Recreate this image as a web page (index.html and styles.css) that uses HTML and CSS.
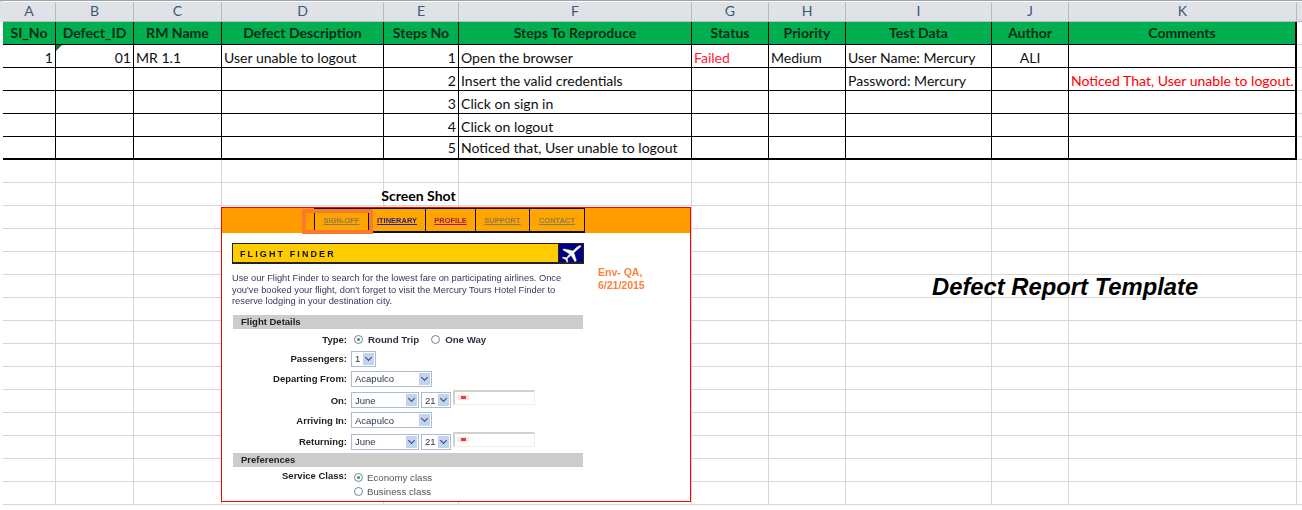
FILE: index.html
```html
<!DOCTYPE html>
<html lang="en">
<head>
<meta charset="utf-8">
<title>Defect Report Template</title>
<link rel="stylesheet" href="styles.css">
</head>
<body>
<main class="sheet">
  <div class="h">A</div><div class="h">B</div><div class="h">C</div><div class="h">D</div><div class="h">E</div><div class="h">F</div><div class="h">G</div><div class="h">H</div><div class="h">I</div><div class="h">J</div><div class="h">K</div><div class="h h-end"></div>

  <div class="g">SI_No</div><div class="g">Defect_ID</div><div class="g">RM Name</div><div class="g">Defect Description</div><div class="g">Steps No</div><div class="g">Steps To Reproduce</div><div class="g">Status</div><div class="g">Priority</div><div class="g">Test Data</div><div class="g">Author</div><div class="g k">Comments</div><div class="e"></div>

  <div class="d r">1</div><div class="d r flag">01</div><div class="d">MR 1.1</div><div class="d">User unable to logout</div><div class="d r">1</div><div class="d">Open the browser</div><div class="d failed">Failed</div><div class="d">Medium</div><div class="d">User Name: Mercury</div><div class="d c">ALI</div><div class="d k"></div><div class="e"></div>

  <div class="d"></div><div class="d"></div><div class="d"></div><div class="d"></div><div class="d r">2</div><div class="d">Insert the valid credentials</div><div class="d"></div><div class="d"></div><div class="d">Password: Mercury</div><div class="d"></div><div class="d k red">Noticed That, User unable to logout.</div><div class="e"></div>

  <div class="d"></div><div class="d"></div><div class="d"></div><div class="d"></div><div class="d r">3</div><div class="d">Click on sign in</div><div class="d"></div><div class="d"></div><div class="d"></div><div class="d"></div><div class="d k"></div><div class="e"></div>

  <div class="d"></div><div class="d"></div><div class="d"></div><div class="d"></div><div class="d r">4</div><div class="d">Click on logout</div><div class="d"></div><div class="d"></div><div class="d"></div><div class="d"></div><div class="d k"></div><div class="e"></div>

  <div class="d l"></div><div class="d l"></div><div class="d l"></div><div class="d l"></div><div class="d l r">5</div><div class="d l">Noticed that, User unable to logout</div><div class="d l"></div><div class="d l"></div><div class="d l"></div><div class="d l"></div><div class="d l k"></div><div class="e"></div>

  <div class="e"></div><div class="e"></div><div class="e"></div><div class="e"></div><div class="e"></div><div class="e"></div><div class="e"></div><div class="e"></div><div class="e"></div><div class="e"></div><div class="e"></div><div class="e"></div>

  <div class="e"></div><div class="e"></div><div class="e"></div><div class="e"></div><div class="e shot">Screen Shot</div><div class="e"></div><div class="e"></div><div class="e"></div><div class="e"></div><div class="e"></div><div class="e"></div><div class="e"></div>

  <div class="e"></div><div class="e"></div><div class="e"></div><div class="e"></div><div class="e"></div><div class="e"></div><div class="e"></div><div class="e"></div><div class="e"></div><div class="e"></div><div class="e"></div><div class="e"></div>
  <div class="e"></div><div class="e"></div><div class="e"></div><div class="e"></div><div class="e"></div><div class="e"></div><div class="e"></div><div class="e"></div><div class="e"></div><div class="e"></div><div class="e"></div><div class="e"></div>
  <div class="e"></div><div class="e"></div><div class="e"></div><div class="e"></div><div class="e"></div><div class="e"></div><div class="e"></div><div class="e"></div><div class="e"></div><div class="e"></div><div class="e"></div><div class="e"></div>
  <div class="e"></div><div class="e"></div><div class="e"></div><div class="e"></div><div class="e"></div><div class="e"></div><div class="e"></div><div class="e"></div><div class="e"></div><div class="e"></div><div class="e"></div><div class="e"></div>
  <div class="e"></div><div class="e"></div><div class="e"></div><div class="e"></div><div class="e"></div><div class="e"></div><div class="e"></div><div class="e"></div><div class="e"></div><div class="e"></div><div class="e"></div><div class="e"></div>
  <div class="e"></div><div class="e"></div><div class="e"></div><div class="e"></div><div class="e"></div><div class="e"></div><div class="e"></div><div class="e"></div><div class="e"></div><div class="e"></div><div class="e"></div><div class="e"></div>
  <div class="e"></div><div class="e"></div><div class="e"></div><div class="e"></div><div class="e"></div><div class="e"></div><div class="e"></div><div class="e"></div><div class="e"></div><div class="e"></div><div class="e"></div><div class="e"></div>
  <div class="e"></div><div class="e"></div><div class="e"></div><div class="e"></div><div class="e"></div><div class="e"></div><div class="e"></div><div class="e"></div><div class="e"></div><div class="e"></div><div class="e"></div><div class="e"></div>
  <div class="e"></div><div class="e"></div><div class="e"></div><div class="e"></div><div class="e"></div><div class="e"></div><div class="e"></div><div class="e"></div><div class="e"></div><div class="e"></div><div class="e"></div><div class="e"></div>
  <div class="e"></div><div class="e"></div><div class="e"></div><div class="e"></div><div class="e"></div><div class="e"></div><div class="e"></div><div class="e"></div><div class="e"></div><div class="e"></div><div class="e"></div><div class="e"></div>
  <div class="e"></div><div class="e"></div><div class="e"></div><div class="e"></div><div class="e"></div><div class="e"></div><div class="e"></div><div class="e"></div><div class="e"></div><div class="e"></div><div class="e"></div><div class="e"></div>
  <div class="e"></div><div class="e"></div><div class="e"></div><div class="e"></div><div class="e"></div><div class="e"></div><div class="e"></div><div class="e"></div><div class="e"></div><div class="e"></div><div class="e"></div><div class="e"></div>
  <div class="e"></div><div class="e"></div><div class="e"></div><div class="e"></div><div class="e"></div><div class="e"></div><div class="e"></div><div class="e"></div><div class="e"></div><div class="e"></div><div class="e"></div><div class="e"></div>
</main>

<section class="shotframe">
  <div class="shotbody">
    <div class="banner">
      <nav class="nav">
        <a class="navitem w-signoff grey">SIGN-OFF</a>
        <a class="navitem w-itin navy">ITINERARY</a>
        <a class="navitem w-profile plum">PROFILE</a>
        <a class="navitem w-support grey">SUPPORT</a>
        <a class="navitem w-contact grey">CONTACT</a>
      </nav>
    </div>
    <div class="content">
      <div class="finder">
        <div class="finder-title">FLIGHT FINDER</div>
        <div class="finder-icon">
          <svg width="24" height="19" viewBox="0 0 24 19" aria-hidden="true"><path fill="#fff" stroke="#9aa" stroke-width=".4" d="M22 1.5C20.5 1 18.5 2.2 17 3.7L14 6.7 5 4.8 3.5 5.8 10.5 10 7.5 13.5 4 13 3 14 6.5 15.5 8 18.5 9 17.5 8.5 14.5 12 11.5 16 18 17.5 16.5 15 8.7 19 5.2C21 3.7 22.5 2.7 22 1.5Z"/></svg>
        </div>
      </div>
      <p class="intro">Use our Flight Finder to search for the lowest fare on participating airlines. Once<br>you've booked your flight, don't forget to visit the Mercury Tours Hotel Finder to<br>reserve lodging in your destination city.</p>
      <div class="band band-first">Flight Details</div>
      <div class="row row-type">
        <span class="lab">Type:</span>
        <span class="radio on"></span><span class="opt">Round Trip</span>
        <span class="radio radio-two"></span><span class="opt">One Way</span>
      </div>
      <div class="row row-pass">
        <span class="lab">Passengers:</span>
        <span class="sel s-pass"><span class="val">1</span><span class="arr"></span></span>
      </div>
      <div class="row row-dep">
        <span class="lab">Departing From:</span>
        <span class="sel s-port"><span class="val">Acapulco</span><span class="arr"></span></span>
      </div>
      <div class="row row-on">
        <span class="lab">On:</span>
        <span class="sel s-month"><span class="val">June</span><span class="arr"></span></span>
        <span class="sel s-day"><span class="val">21</span><span class="arr"></span></span>
        <span class="datebox"><svg width="11" height="5" viewBox="0 0 11 5" aria-hidden="true"><rect width="11" height="5" fill="#f0e6e6"/><rect x="3" y="1" width="5" height="3" fill="#ee3b3b"/></svg></span>
      </div>
      <div class="row row-arr">
        <span class="lab">Arriving In:</span>
        <span class="sel s-port"><span class="val">Acapulco</span><span class="arr"></span></span>
      </div>
      <div class="row row-ret">
        <span class="lab">Returning:</span>
        <span class="sel s-month"><span class="val">June</span><span class="arr"></span></span>
        <span class="sel s-day"><span class="val">21</span><span class="arr"></span></span>
        <span class="datebox"><svg width="11" height="5" viewBox="0 0 11 5" aria-hidden="true"><rect width="11" height="5" fill="#f0e6e6"/><rect x="3" y="1" width="5" height="3" fill="#ee3b3b"/></svg></span>
      </div>
      <div class="band">Preferences</div>
      <div class="service">
        <span class="lab lab-top">Service Class:</span>
        <div class="classes">
          <div class="cls"><span class="radio on"></span><span class="cls-text">Economy class</span></div>
          <div class="cls"><span class="radio"></span><span class="cls-text">Business class</span></div>
        </div>
      </div>
    </div>
    <div class="env">Env- QA,<br>6/21/2015</div>
    <div class="highlight"></div>
  </div>
</section>

<div class="title">Defect Report Template</div>
</body>
</html>
```
FILE: styles.css
```css
* { box-sizing: border-box; }
html, body { margin: 0; height: 510px; overflow: hidden; background: #fff; }
body { position: relative; font-family: "Lato", "Liberation Sans", sans-serif; }

/* Spreadsheet grid */
.sheet {
  display: grid;
  grid-template-columns: 53px 78px 88px 162px 75px 233px 77px 77px 146px 77px 228px 5px;
  grid-template-rows: 20px;
  grid-auto-rows: 23px;
  padding: 1px 0 0 3px;
  height: 510px;
  width: 1302px;
  font-size: 14.05px;
  color: #101010;
  border-top: 1px solid #9ea3a8;
  background: linear-gradient(#dfe3e8, #dfe3e8) left top / 3px 21px no-repeat;
}
.h {
  background: #dfe3e8;
  border-right: 1px solid #b6bac0;
  border-bottom: 1px solid #b6bac0;
  color: #3d5876;
  display: flex;
  align-items: center;
  justify-content: center;
  line-height: 1;
}
.h-end { border-right: 0; }
.g {
  background: #00b050;
  border-right: 1px solid #000;
  border-bottom: 1px solid #000;
  display: flex;
  align-items: center;
  justify-content: center;
  padding-bottom: 1px;
  font-weight: 700;
  color: #0b2a17;
  white-space: nowrap;
}
.d {
  border-right: 1px solid #000;
  border-bottom: 1px solid #000;
  display: flex;
  align-items: flex-end;
  padding: 0 2px 0 2px;
  line-height: 19px;
  white-space: nowrap;
  position: relative;
}
.d.l { border-bottom-width: 2px; height: 23px; padding-bottom: 1px; }
.r { justify-content: flex-end; }
.c { justify-content: center; }
.k { border-right-width: 2px; }
.failed { color: #ff1a3c; }
.red { color: #f00; }
.flag::before {
  content: "";
  position: absolute;
  left: 0;
  top: 0;
  border-top: 6px solid #157a15;
  border-right: 6px solid transparent;
}
.e {
  border-right: 1px solid #d6d6d6;
  border-bottom: 1px solid #d6d6d6;
}
.sheet > .e:nth-child(12n) { border-right: 0; }
.shot {
  font-weight: 700;
  color: #000;
  display: flex;
  align-items: flex-end;
  justify-content: center;
  white-space: nowrap;
  padding-right: 5px;
  line-height: 19px;
}

/* Pasted screenshot */
.shotframe {
  position: absolute;
  left: 221px;
  top: 207px;
  width: 470px;
  height: 295px;
  border: 1px solid #f00;
  background: #fff;
  overflow: hidden;
}
.shotbody {
  position: relative;
  height: 100%;
  font-family: "Liberation Sans", Arial, sans-serif;
  filter: blur(0.3px);
}
.banner {
  height: 25px;
  background: #ff9c00;
  display: flex;
  justify-content: flex-end;
  padding-right: 105px;
}
.nav {
  display: flex;
  height: 25px;
  border: 1px solid #111;
  border-bottom-width: 2px;
  background: #ffa500;
}
.navitem {
  display: flex;
  align-items: center;
  justify-content: center;
  border-right: 1px solid #111;
  font-size: 7.5px;
  font-weight: 700;
  text-decoration: underline;
}
.navitem:last-child { border-right: 0; }
.w-signoff { width: 54px; }
.w-itin { width: 57px; }
.w-profile { width: 50px; }
.w-support { width: 54px; }
.w-contact { width: 54px; }
.grey { color: #8d7a58; }
.navy { color: #2b1a96; }
.plum { color: #a3146e; }

.content {
  width: 362px;
  padding: 10px 0 0 10px;
}
.finder {
  display: flex;
  height: 21px;
  border: 1px solid #222;
  border-bottom-width: 2px;
  background: #fc0;
}
.finder-title {
  flex: 1;
  font-size: 9px;
  font-weight: 700;
  letter-spacing: 2.1px;
  line-height: 20px;
  padding-left: 7px;
  color: #111;
}
.finder-icon {
  width: 25px;
  background: #000080;
  border-left: 1px solid #222;
  display: flex;
  align-items: center;
  justify-content: center;
}
.intro {
  margin: 9px 0 0;
  font-size: 9.3px;
  line-height: 11.7px;
  color: #41335f;
  white-space: nowrap;
}
.band {
  height: 14px;
  margin: 0 0 0 1px;
  width: 350px;
  background: #ccc;
  font-size: 9.5px;
  font-weight: 700;
  line-height: 14px;
  padding-left: 8px;
  color: #222;
}
.band-first { margin-top: 6.4px; }
.row {
  display: flex;
  align-items: center;
  font-size: 9.5px;
  color: #222;
  font-weight: 700;
}
.lab {
  width: 115px;
  text-align: right;
  margin-right: 4px;
  font-weight: 700;
  color: #222;
  flex: none;
}
.row-type { height: 22px; }
.row-pass { height: 16px; }
.row-dep { height: 24px; }
.row-on { height: 19px; }
.row-arr { height: 21px; }
.row-ret { height: 22px; }
.radio {
  display: inline-block;
  width: 9px;
  height: 9px;
  border-radius: 50%;
  border: 1px solid #6f8597;
  background: #fff;
  position: relative;
  margin-left: 3px;
  flex: none;
}
.radio.on::after {
  content: "";
  position: absolute;
  left: 2px;
  top: 2px;
  width: 3px;
  height: 3px;
  border-radius: 50%;
  background: #2c9a47;
}
.opt { margin-left: 5px; color: #303040; font-size: 9.7px; }
.radio-two { margin-left: 12px; }
.sel {
  display: flex;
  align-items: center;
  height: 16px;
  border: 1px solid #a9bdd2;
  background: #fff;
  padding: 1px;
  font-weight: 400;
  flex: none;
}
.val { flex: 1; padding-left: 2px; color: #33334d; font-size: 9.5px; }
.arr {
  width: 11px;
  height: 12px;
  background: #c2d3f0;
  position: relative;
}
.arr::after {
  content: "";
  position: absolute;
  left: 3px;
  top: 2px;
  width: 4px;
  height: 4px;
  border-right: 1.5px solid #33476b;
  border-bottom: 1.5px solid #33476b;
  transform: rotate(45deg);
}
.s-pass { width: 25px; }
.s-port { width: 81px; }
.s-month { width: 68px; }
.s-day { width: 30px; margin-left: 2px; }
.datebox {
  width: 82px;
  height: 15px;
  margin: 0 0 5px 2px;
  border: 1px solid #f0eee6;
  border-top: 2px solid #d4d1c8;
  border-left: 2px solid #d4d1c8;
  padding: 3px 0 0 3px;
  background: #fff;
  line-height: 0;
}
.service {
  display: flex;
  font-size: 9.5px;
  padding-top: 3px;
}
.lab-top { line-height: 12px; }
.classes { display: flex; flex-direction: column; margin-top: -1px; }
.cls {
  display: flex;
  align-items: center;
  height: 14px;
  padding-top: 3px;
}
.cls-text { margin-left: 4px; color: #555; font-size: 9.7px; }
.env {
  position: absolute;
  left: 376px;
  top: 58px;
  font-size: 10.5px;
  font-weight: 700;
  line-height: 13px;
  color: #ff8038;
}
.highlight {
  position: absolute;
  left: 80px;
  top: 1px;
  width: 71px;
  height: 25px;
  border: 4px solid #fb7a2e;
}

.title {
  position: absolute;
  left: 932px;
  top: 273px;
  font: italic 700 23.8px/28px "Liberation Sans", Arial, sans-serif;
  color: #000;
  white-space: nowrap;
}
```
